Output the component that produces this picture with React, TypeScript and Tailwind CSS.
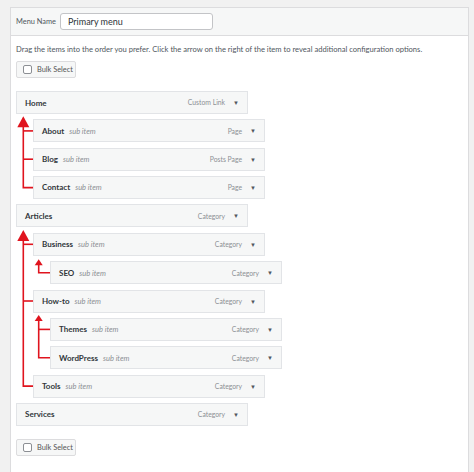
import React from "react";

type MenuItem = {
  title: string;
  kind: string;
  level: 0 | 1 | 2;
};

const items: MenuItem[] = [
  { title: "Home", kind: "Custom Link", level: 0 },
  { title: "About", kind: "Page", level: 1 },
  { title: "Blog", kind: "Posts Page", level: 1 },
  { title: "Contact", kind: "Page", level: 1 },
  { title: "Articles", kind: "Category", level: 0 },
  { title: "Business", kind: "Category", level: 1 },
  { title: "SEO", kind: "Category", level: 2 },
  { title: "How-to", kind: "Category", level: 1 },
  { title: "Themes", kind: "Category", level: 2 },
  { title: "WordPress", kind: "Category", level: 2 },
  { title: "Tools", kind: "Category", level: 1 },
  { title: "Services", kind: "Category", level: 0 },
];

const indent = ["ml-0", "ml-[17px]", "ml-[34px]"];

function BulkSelect() {
  return (
    <button
      type="button"
      className="flex h-[17px] w-[60px] items-center gap-[5px] whitespace-nowrap rounded-[2px] border border-[#dcdcde] bg-[#f6f7f7] pl-[6px] text-[7.4px] text-[#555]"
    >
      <span className="block h-[9px] w-[9px] shrink-0 rounded-[2px] border border-[#8c8f94] bg-white" />
      Bulk Select
    </button>
  );
}

function ItemRow({ item }: { item: MenuItem }) {
  return (
    <div
      className={`${indent[item.level]} flex h-[23px] w-[232px] items-center whitespace-nowrap border border-[#e2e4e7] bg-[#f6f7f7] pl-[8px] pr-[8px]`}
    >
      <span className="flex items-baseline">
        <span className="text-[8px] font-bold text-[#32373c]">{item.title}</span>
        {item.level > 0 ? (
          <span className="ml-[5px] text-[7.5px] italic text-[#8c8f94]">sub item</span>
        ) : null}
      </span>
      <span className="ml-auto text-[6.8px] text-[#8c8f94]">{item.kind}</span>
      <span className="ml-[8px] text-[6px] text-[#50575e]">▼</span>
    </div>
  );
}

// red annotation arrows drawn over the list
function Arrows() {
  const red = "#e0141e";
  return (
    <svg
      className="pointer-events-none absolute left-0 top-0"
      width="280"
      height="320"
      viewBox="0 0 280 320"
    >
      <g stroke={red} strokeWidth="1.6" fill="none">
        {/* Home children */}
        <path d="M7.3 35 V96.6 H17" />
        <path d="M7.3 39.9 H17" />
        <path d="M7.3 68.2 H17" />
        {/* Articles children */}
        <path d="M7.3 149 V295.1 H17" />
        <path d="M7.3 153.3 H17" />
        <path d="M7.3 210 H17" />
        {/* Business children */}
        <path d="M22.7 173 V181.7 H34" />
        {/* How-to children */}
        <path d="M22.7 230 V266.7 H34" />
        <path d="M22.7 238.4 H34" />
      </g>
      <g fill={red}>
        <polygon points="7.3,25.3 13.3,36.3 1.3,36.3" />
        <polygon points="7.3,139 13.3,150 1.3,150" />
        <polygon points="22.7,168.3 26.7,174.3 18.7,174.3" />
        <polygon points="22.7,224 26.7,230 18.7,230" />
      </g>
    </svg>
  );
}

export default function App() {
  return (
    <div className="min-h-[472px] bg-[#f1f1f1] pl-[10px] pr-[5px] pt-[7px] font-['Lato',sans-serif]">
      <div className="min-h-[465px] border border-b-0 border-[#dcdcde] bg-white">
        <div className="flex h-[28px] items-center gap-[4px] border-b border-[#dcdcde] bg-[#f6f7f7] px-[5px]">
          <span className="text-[7.4px] text-[#50575e]">Menu Name</span>
          <div className="flex h-[17px] w-[153px] items-center rounded-[3px] border border-[#c3c4c7] bg-white px-[7px] text-[9px] text-[#2c3338]">
            Primary menu
          </div>
        </div>
        <div className="px-[5px] pt-[7px]">
          <p className="whitespace-nowrap text-[7.6px] leading-[12px] text-[#50575e]">
            Drag the items into the order you prefer. Click the arrow on the right of the item to reveal additional configuration options.
          </p>
          <div className="mt-[6px]">
            <BulkSelect />
          </div>
          <div className="relative mt-[13px] flex flex-col gap-[5.36px]">
            {items.map((item) => (
              <ItemRow key={item.title} item={item} />
            ))}
            <Arrows />
          </div>
          <div className="mt-[13px]">
            <BulkSelect />
          </div>
        </div>
      </div>
    </div>
  );
}
